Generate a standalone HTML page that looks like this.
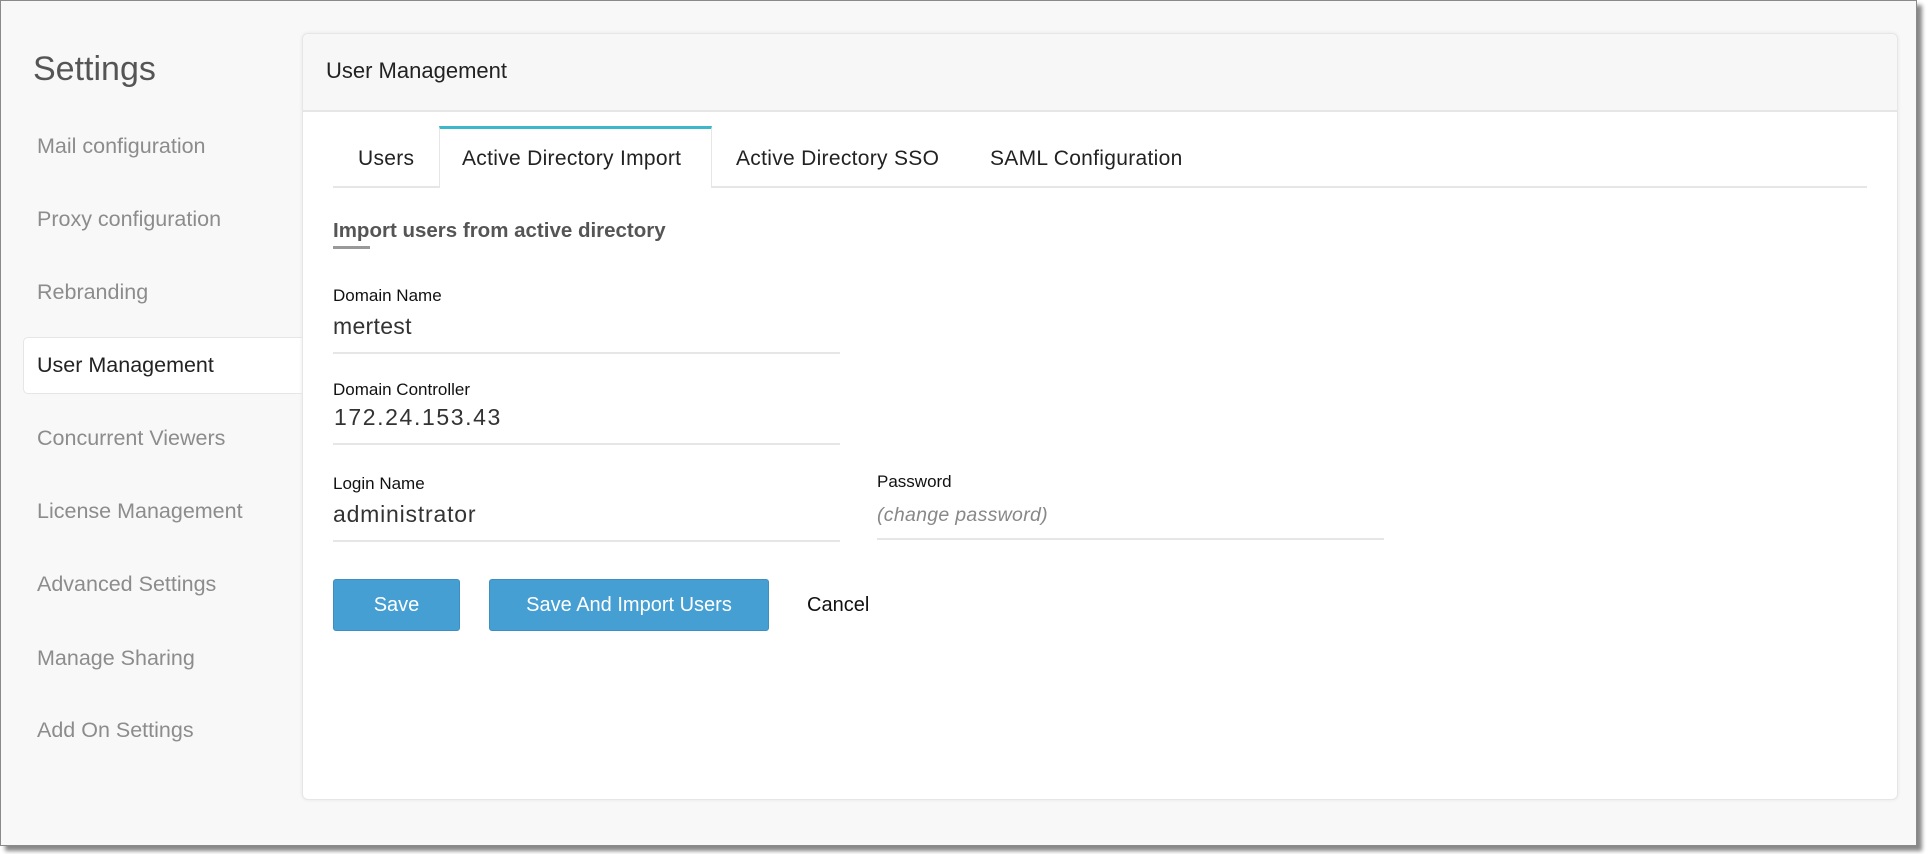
<!DOCTYPE html>
<html><head><meta charset="utf-8"><style>
*{box-sizing:border-box;margin:0;padding:0}
html,body{width:1928px;height:854px;overflow:hidden;background:#fff;font-family:"Liberation Sans",sans-serif}
#frame{position:absolute;left:0;top:0;width:1917px;height:846px;background:#f8f8f8;border:1px solid #8a8a8a;box-shadow:5px 5px 4px #888}
.abs{position:absolute;white-space:nowrap}
.side{position:absolute;left:36px;font-size:21.5px;color:#8c8c8c;line-height:24px;white-space:nowrap}
#active{position:absolute;left:22px;top:336px;width:281px;height:57px;background:#fff;border:1px solid #e6e6e6;border-right:none;border-radius:5px 0 0 5px}
#card{position:absolute;left:302px;top:33px;width:1596px;height:767px;background:#fff;border:1px solid #e6e6e6;border-radius:6px;box-shadow:0 0 3px #e5e5e5}
#hdr{position:absolute;left:0;top:0;width:100%;height:78px;background:#f7f7f7;border-bottom:2px solid #e6e6e6;border-radius:6px 6px 0 0}
.tab{position:absolute;top:147px;font-size:21px;color:#222;letter-spacing:0.3px;white-space:nowrap}
.lbl{position:absolute;font-size:17px;color:#111;white-space:nowrap}
.val{position:absolute;font-size:23px;color:#333;white-space:nowrap}
.line{position:absolute;height:2px;background:#e6e6e6}
.btn{position:absolute;top:579px;height:52px;background:#469fd3;border:1px solid #3d8fc2;border-radius:3px;color:#fff;font-size:20px;text-align:center;line-height:50px}
</style></head><body>
<div id="frame">
<div class="abs" style="left:32px;top:49px;font-size:34px;color:#555">Settings</div>
<div id="active"></div>
<div class="side" style="top:133px">Mail configuration</div>
<div class="side" style="top:206px">Proxy configuration</div>
<div class="side" style="top:279px">Rebranding</div>
<div class="side" style="top:352px;color:#222">User Management</div>
<div class="side" style="top:425px">Concurrent Viewers</div>
<div class="side" style="top:498px">License Management</div>
<div class="side" style="top:571px">Advanced Settings</div>
<div class="side" style="top:645px">Manage Sharing</div>
<div class="side" style="top:717px">Add On Settings</div>
</div>
<div id="card"><div id="hdr"></div></div>
<div class="abs" style="left:326px;top:58px;font-size:22px;color:#222">User Management</div>
<div class="line" style="left:333px;top:186px;width:1534px"></div>
<div style="position:absolute;left:439px;top:126px;width:273px;height:62px;background:#fff;border:1px solid #e6e6e6;border-top:3px solid #3bb8c9;border-bottom:none"></div>
<div class="tab" style="left:358px">Users</div>
<div class="tab" style="left:462px">Active Directory Import</div>
<div class="tab" style="left:736px">Active Directory SSO</div>
<div class="tab" style="left:990px">SAML Configuration</div>
<div class="abs" style="left:333px;top:219px;font-size:20.5px;color:#555;font-weight:bold">Import users from active directory</div>
<div style="position:absolute;left:333px;top:246px;width:37px;height:3px;background:#999"></div>
<div class="lbl" style="left:333px;top:286px">Domain Name</div>
<div class="val" style="left:333px;top:313px;letter-spacing:0.3px">mertest</div>
<div class="line" style="left:333px;top:352px;width:507px"></div>
<div class="lbl" style="left:333px;top:380px">Domain Controller</div>
<div class="val" style="left:334px;top:404px;letter-spacing:1.6px">172.24.153.43</div>
<div class="line" style="left:333px;top:443px;width:507px"></div>
<div class="lbl" style="left:333px;top:474px">Login Name</div>
<div class="val" style="left:333px;top:501px;letter-spacing:0.8px">administrator</div>
<div class="line" style="left:333px;top:540px;width:507px"></div>
<div class="lbl" style="left:877px;top:472px">Password</div>
<div class="abs" style="left:877px;top:504px;font-size:19.5px;color:#888;font-style:italic;letter-spacing:0.3px">(change password)</div>
<div class="line" style="left:877px;top:538px;width:507px"></div>
<div class="btn" style="left:333px;width:127px">Save</div>
<div class="btn" style="left:489px;width:280px">Save And Import Users</div>
<div class="abs" style="left:807px;top:594px;font-size:20px;color:#111">Cancel</div>
</body></html>
